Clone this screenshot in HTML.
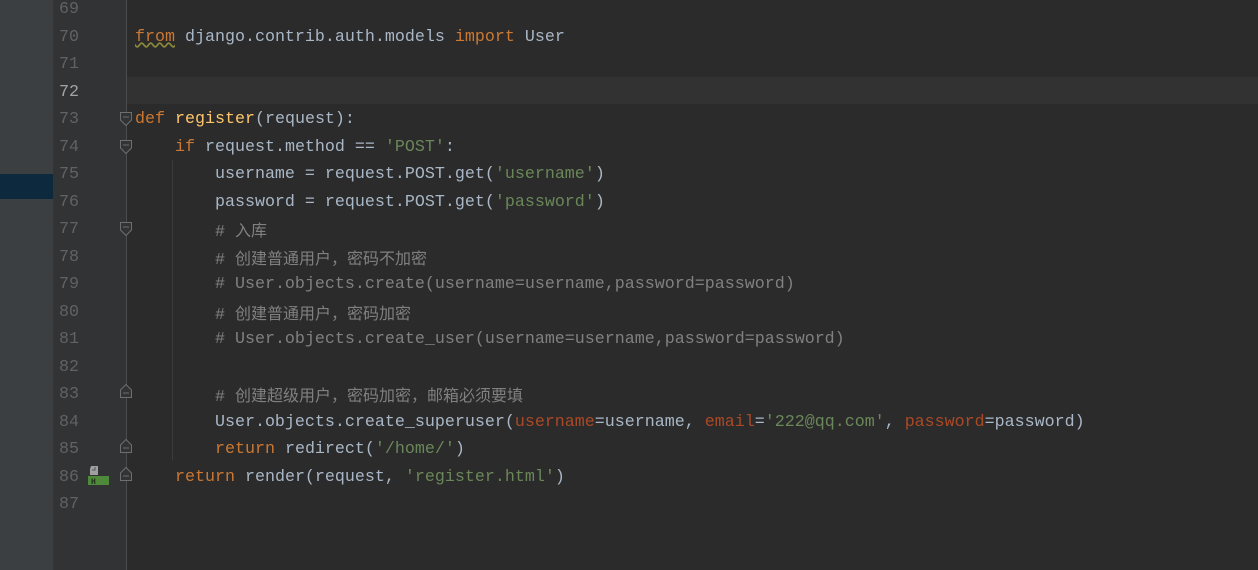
<!DOCTYPE html>
<html><head><meta charset="utf-8"><style>
body{margin:0;width:1258px;height:570px;overflow:hidden;background:#2b2b2b;position:relative;font-family:"Liberation Mono","Noto Sans CJK SC",monospace;}
#lp{position:absolute;left:0;top:0;width:53px;height:570px;background:#3c3f41;}
#lph{position:absolute;left:0;top:174px;width:53px;height:25px;background:#0d293e;}
#gut{position:absolute;left:53px;top:0;width:74px;height:570px;background:#313335;}
#gl{position:absolute;left:126px;top:0;width:1px;height:570px;background:#4b4d4f;}
#cur{position:absolute;left:127px;top:77px;right:0;height:27px;background:#323232;}
.ln{position:absolute;left:53px;width:26px;text-align:right;color:#606366;font-size:16.67px;line-height:27.5px;}
.c{position:absolute;left:135px;color:#a9b7c6;font-size:16.67px;line-height:27.5px;white-space:pre;}
.k{color:#cc7832}.f{color:#ffc66d}.s{color:#6a8759}.m{color:#808080}.p{color:#aa4926}
.cj{font-family:"Noto Sans CJK SC",sans-serif;font-size:16px;}
.ig{position:absolute;left:172px;top:160px;width:1px;height:300px;background:#3b3b3b;}
.fd{position:absolute;left:120px;width:12px;height:14px;}
</style></head><body>
<div id="lp"></div><div id="lph"></div><div id="gut"></div><div id="cur"></div><div id="gl"></div>
<div class="ig"></div>
<div class="ln" style="top:-4px">69</div>
<div class="ln" style="top:24px">70</div>
<div class="ln" style="top:51px">71</div>
<div class="ln" style="top:79px;color:#a4a3a3">72</div>
<div class="ln" style="top:106px">73</div>
<div class="ln" style="top:134px">74</div>
<div class="ln" style="top:161px">75</div>
<div class="ln" style="top:189px">76</div>
<div class="ln" style="top:216px">77</div>
<div class="ln" style="top:244px">78</div>
<div class="ln" style="top:271px">79</div>
<div class="ln" style="top:299px">80</div>
<div class="ln" style="top:326px">81</div>
<div class="ln" style="top:354px">82</div>
<div class="ln" style="top:381px">83</div>
<div class="ln" style="top:409px">84</div>
<div class="ln" style="top:436px">85</div>
<div class="ln" style="top:464px">86</div>
<div class="ln" style="top:491px">87</div>
<div class="c" style="top:24px"><span class="k" style="text-decoration:underline wavy #8a8a3a">from</span> django.contrib.auth.models <span class="k">import</span> User</div>
<div class="c" style="top:106px"><span class="k">def</span> <span class="f">register</span>(request):</div>
<div class="c" style="top:134px">    <span class="k">if</span> request.method == <span class="s">'POST'</span>:</div>
<div class="c" style="top:161px">        username = request.POST.get(<span class="s">'username'</span>)</div>
<div class="c" style="top:189px">        password = request.POST.get(<span class="s">'password'</span>)</div>
<div class="c" style="top:216px">        <span class="m"># <span class="cj">入库</span></span></div>
<div class="c" style="top:244px">        <span class="m"># <span class="cj">创建普通用户，密码不加密</span></span></div>
<div class="c" style="top:271px">        <span class="m"># User.objects.create(username=username,password=password)</span></div>
<div class="c" style="top:299px">        <span class="m"># <span class="cj">创建普通用户，密码加密</span></span></div>
<div class="c" style="top:326px">        <span class="m"># User.objects.create_user(username=username,password=password)</span></div>
<div class="c" style="top:381px">        <span class="m"># <span class="cj">创建超级用户，密码加密，邮箱必须要填</span></span></div>
<div class="c" style="top:409px">        User.objects.create_superuser(<span class="p">username</span>=username, <span class="p">email</span>=<span class="s">'222@qq.com'</span>, <span class="p">password</span>=password)</div>
<div class="c" style="top:436px">        <span class="k">return</span> redirect(<span class="s">'/home/'</span>)</div>
<div class="c" style="top:464px">    <span class="k">return</span> render(request, <span class="s">'register.html'</span>)</div>
<svg class="fd" style="top:112px" viewBox="0 0 12 14"><path d="M0.5 0.5H11.5V8L6 13.5L0.5 8Z M3 5H9" fill="#313335" stroke="#6e6e6e"/></svg>
<svg class="fd" style="top:140px" viewBox="0 0 12 14"><path d="M0.5 0.5H11.5V8L6 13.5L0.5 8Z M3 5H9" fill="#313335" stroke="#6e6e6e"/></svg>
<svg class="fd" style="top:222px" viewBox="0 0 12 14"><path d="M0.5 0.5H11.5V8L6 13.5L0.5 8Z M3 5H9" fill="#313335" stroke="#6e6e6e"/></svg>
<svg class="fd" style="top:384px" viewBox="0 0 12 14"><path d="M0.5 13.5H11.5V6L6 0.5L0.5 6Z M3 9H9" fill="#313335" stroke="#6e6e6e"/></svg>
<svg class="fd" style="top:439px" viewBox="0 0 12 14"><path d="M0.5 13.5H11.5V6L6 0.5L0.5 6Z M3 9H9" fill="#313335" stroke="#6e6e6e"/></svg>
<svg class="fd" style="top:467px" viewBox="0 0 12 14"><path d="M0.5 13.5H11.5V6L6 0.5L0.5 6Z M3 9H9" fill="#313335" stroke="#6e6e6e"/></svg>
<svg style="position:absolute;left:87px;top:465px" width="24" height="22" viewBox="0 0 24 22"><path d="M4 1H11V10H3V4Z" fill="#a0a0a0"/><path d="M5 5H8V2" fill="none" stroke="#555" stroke-width="1"/><rect x="1" y="11" width="21" height="9" fill="#4e8a3a"/><text x="4" y="19" font-size="8" font-family="Liberation Mono" fill="#1e2a1a" font-weight="bold">H</text></svg>
</body></html>
